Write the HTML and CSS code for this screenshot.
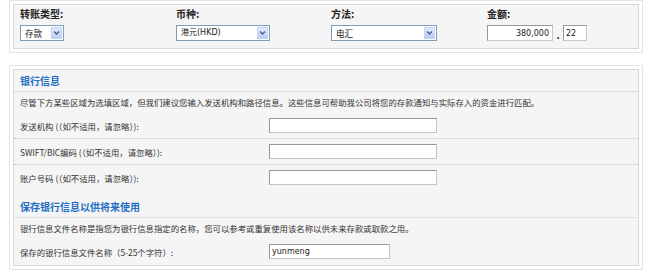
FILE: index.html
```html
<!DOCTYPE html>
<html lang="zh-CN">

<head>
    <meta charset="UTF-8">
    <meta name="viewport" content="width=device-width, initial-scale=1.0">
    <title>存款</title>
    <link rel="stylesheet" href="styles.css">
</head>

<body>
    <!-- 转账信息 -->
    <div class="panel">
        <div class="panel-inner transfer">
            <div class="field">
                <div class="field-label">转账类型:</div>
                <div class="select select-sm">
                    <span class="select-text">存款</span>
                    <span class="select-arrow"><svg width="9" height="10" viewBox="0 0 9 10"><path d="M2 3.5 L4.5 6 L7 3.5" fill="none" stroke="#4a5f8a" stroke-width="1.4"/></svg></span>
                </div>
            </div>
            <div class="field">
                <div class="field-label">币种:</div>
                <div class="select select-md">
                    <span class="select-text">港元(HKD)</span>
                    <span class="select-arrow"><svg width="9" height="10" viewBox="0 0 9 10"><path d="M2 3.5 L4.5 6 L7 3.5" fill="none" stroke="#4a5f8a" stroke-width="1.4"/></svg></span>
                </div>
            </div>
            <div class="field">
                <div class="field-label">方法:</div>
                <div class="select select-lg">
                    <span class="select-text">电汇</span>
                    <span class="select-arrow"><svg width="9" height="10" viewBox="0 0 9 10"><path d="M2 3.5 L4.5 6 L7 3.5" fill="none" stroke="#4a5f8a" stroke-width="1.4"/></svg></span>
                </div>
            </div>
            <div class="field">
                <div class="field-label">金额:</div>
                <div class="amount">
                    <input type="text" class="amount-input" value="380,000">
                    <span class="amount-dot">.</span>
                    <input type="text" class="amount-input decimal" value="22">
                </div>
            </div>
        </div>
    </div>

    <!-- 银行信息 -->
    <div class="panel panel-bank">
        <div class="panel-inner">
            <h3 class="section-title">银行信息</h3>
            <p class="note">尽管下方某些区域为选填区域，但我们建议您输入发送机构和路径信息。这些信息可帮助我公司将您的存款通知与实际存入的资金进行匹配。</p>
            <div class="form-row">
                <label>发送机构 (（如不适用，请忽略）):</label>
                <input type="text" class="text-input">
            </div>
            <div class="form-row">
                <label>SWIFT/BIC编码 (（如不适用，请忽略）):</label>
                <input type="text" class="text-input">
            </div>
            <div class="form-row no-line">
                <label>账户号码 (（如不适用，请忽略）):</label>
                <input type="text" class="text-input">
            </div>

            <h3 class="section-title sub">保存银行信息以供将来使用</h3>
            <p class="note note-sm">银行信息文件名称是指您为银行信息指定的名称，您可以参考或重复使用该名称以供未来存款或取款之用。</p>
            <div class="form-row no-line last">
                <label>保存的银行信息文件名称（5-25个字符）:</label>
                <input type="text" class="text-input short" value="yunmeng">
            </div>
        </div>
    </div>
</body>

</html>
```

FILE: styles.css
```css
body {
    margin: 0;
    background-color: #fff;
    color: #333;
    font-family: "Noto Sans CJK SC", sans-serif;
    font-size: 8.4px;
}

.panel {
    box-sizing: border-box;
    width: 634px;
    margin-left: 9px;
    border: 1px solid #e4e4e4;
    padding: 3px;
    background-color: #fff;
}

.panel-inner {
    border: 1px solid #d8d8d8;
    background-color: #f5f5f5;
}

.panel-bank {
    margin-top: 12px;
}

/* 顶部转账字段 */
.transfer {
    display: grid;
    grid-template-columns: 156px 155px 156px auto;
    padding: 2px 0 7px 6px;
}

.field-label {
    font-size: 10px;
    font-weight: bold;
    color: #222;
    line-height: 14px;
    margin-bottom: 4px;
}

.select {
    box-sizing: border-box;
    display: flex;
    align-items: center;
    height: 16px;
    border: 1px solid #7f9db9;
    background-color: #fff;
    padding-left: 4px;
    color: #222;
}

.select-sm {
    width: 44px;
}

.select-md {
    width: 94px;
}

.select-lg {
    width: 106px;
}

.select-text {
    flex: 1;
    line-height: 14px;
    white-space: nowrap;
}

.select-text,
.amount-input {
    font-family: "DejaVu Sans", "Noto Sans CJK SC", sans-serif;
    font-size: 8px;
}

.select-sm .select-text,
.select-lg .select-text {
    font-family: "Noto Sans CJK SC", sans-serif;
    font-size: 8.6px;
}

.select-arrow {
    box-sizing: border-box;
    display: flex;
    align-items: center;
    justify-content: center;
    width: 11px;
    height: 12px;
    margin-right: 1px;
    border: 1px solid #c3d3f5;
    background: linear-gradient(#e3ebfd, #b9cdf6);
}

.amount {
    display: flex;
    align-items: flex-end;
}

.amount-input {
    box-sizing: border-box;
    width: 66px;
    height: 16px;
    margin: 0;
    padding: 0 3px;
    border: 1px solid #999;
    border-right-color: #c8c8c8;
    border-bottom-color: #c8c8c8;
    background-color: #fff;
    color: #222;
    text-align: right;
}

.amount-input.decimal {
    width: 24px;
    text-align: left;
    padding: 0 2px;
}

.amount-dot {
    width: 10px;
    text-align: center;
    font-weight: bold;
    font-size: 10px;
    line-height: 12px;
}

/* 银行信息 */
.section-title {
    margin: 0;
    padding: 0 6px;
    font-size: 10px;
    font-weight: bold;
    color: #1f6fc5;
    line-height: 21px;
    border-bottom: 1px solid #dcdcdc;
}

.section-title.sub {
    padding-top: 7px;
    line-height: 20px;
    border-bottom-color: #e2e2e2;
}

.note {
    margin: 0;
    padding: 0 6px;
    line-height: 21px;
}

.note-sm {
    line-height: 20px;
}

.form-row {
    display: flex;
    align-items: center;
    padding: 5px 6px;
    border-bottom: 1px dotted #c0c0c0;
}

.form-row.no-line {
    border-bottom: none;
}

.form-row.last {
    padding: 6px;
}

.form-row label {
    width: 249px;
    flex-shrink: 0;
    white-space: nowrap;
}

.text-input {
    box-sizing: border-box;
    width: 168px;
    height: 15px;
    margin: 0;
    padding: 0 2px;
    border: 1px solid #999;
    border-right-color: #c4c4c4;
    border-bottom-color: #c4c4c4;
    background-color: #fff;
    font-family: "DejaVu Sans", sans-serif;
    font-size: 8px;
    color: #222;
}

.text-input.short {
    width: 121px;
}
```
